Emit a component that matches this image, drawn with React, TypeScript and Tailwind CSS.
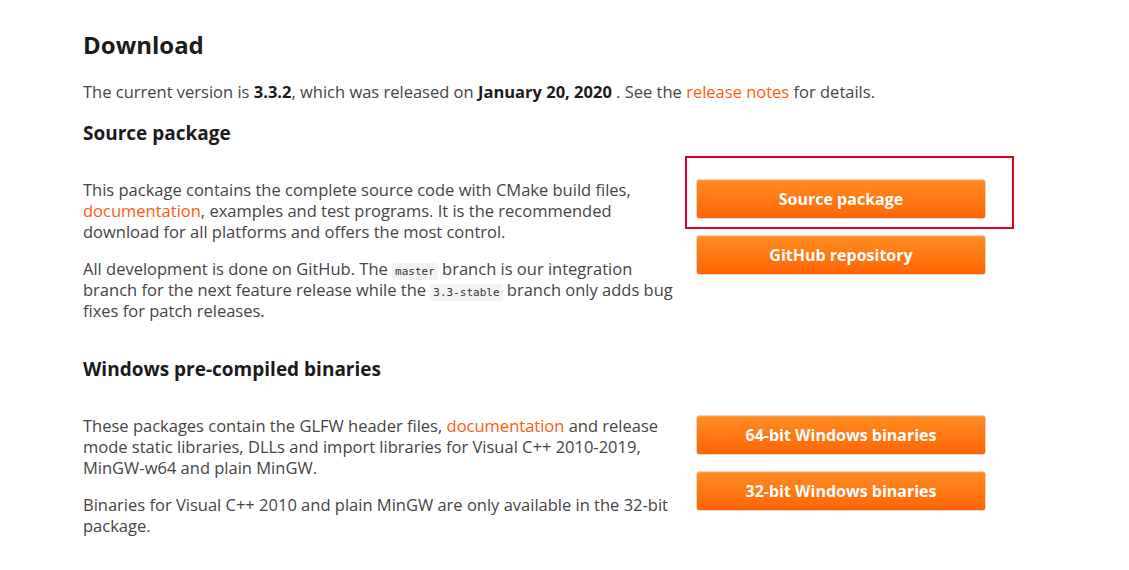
import React from 'react';

const Code: React.FC<{ children: React.ReactNode }> = ({ children }) => (
  <code className="bg-[#f3f3f3] rounded-[3px] px-[3px] py-[2px] text-[11px] leading-none text-[#333] font-['DejaVu_Sans_Mono',monospace]">
    {children}
  </code>
);

const Link: React.FC<{ children: React.ReactNode }> = ({ children }) => (
  <a href="#" className="text-[#ff5a0a]">{children}</a>
);

const OrangeButton: React.FC<{ label: string }> = ({ label }) => (
  <a
    href="#"
    className="flex items-center justify-center w-[290px] h-[40px] rounded-[3px] border border-[#e2d6cc] bg-gradient-to-b from-[#ff8c22] to-[#ff6500] text-white font-bold text-[16px] shadow-[inset_0_1px_0_rgba(255,255,255,0.15)]"
  >
    {label}
  </a>
);

export default function App() {
  return (
    <div className="min-h-[570px] bg-white font-['Open_Sans','Noto_Sans',sans-serif] text-[16.5px] leading-[21px] text-[#454545]">
      <div className="pl-[83px] pt-[29px] w-[1040px]">
        <h1 className="text-[24px] leading-[32px] font-bold text-[#1b1b1b]">Download</h1>
        <p className="mt-[20px]">
          The current version is <b className="text-[#1b1b1b]">3.3.2</b>, which was released on{' '}
          <b className="text-[#1b1b1b]">January 20, 2020</b> . See the <Link>release notes</Link> for details.
        </p>

        <h2 className="mt-[17px] text-[19px] leading-[28px] font-bold text-[#1b1b1b]">Source package</h2>
        <div className="mt-[32px] flex gap-[16px]">
          <div className="w-[597px] flex flex-col gap-[16px]">
            <p>
              This package contains the complete source code with CMake build files, <Link>documentation</Link>,
              examples and test programs. It is the recommended download for all platforms and offers the most
              control.
            </p>
            <p>
              All development is done on GitHub. The <Code>master</Code> branch is our integration branch for the
              next feature release while the <Code>3.3-stable</Code> branch only adds bug fixes for patch releases.
            </p>
          </div>
          <div className="flex flex-col gap-[16px]">
            <div className="relative">
              <OrangeButton label="Source package" />
              <div className="absolute left-[-11px] top-[-23px] w-[329px] h-[73px] border-2 border-[#e0001b] pointer-events-none" />
            </div>
            <OrangeButton label="GitHub repository" />
          </div>
        </div>

        <h2 className="mt-[34px] text-[19px] leading-[28px] font-bold text-[#1b1b1b]">Windows pre-compiled binaries</h2>
        <div className="mt-[32px] flex gap-[16px]">
          <div className="w-[597px] flex flex-col gap-[16px]">
            <p>
              These packages contain the GLFW header files, <Link>documentation</Link> and release mode static
              libraries, DLLs and import libraries for Visual C++ 2010-2019, MinGW-w64 and plain MinGW.
            </p>
            <p>Binaries for Visual C++ 2010 and plain MinGW are only available in the 32-bit package.</p>
          </div>
          <div className="flex flex-col gap-[16px]">
            <OrangeButton label="64-bit Windows binaries" />
            <OrangeButton label="32-bit Windows binaries" />
          </div>
        </div>
      </div>
    </div>
  );
}
